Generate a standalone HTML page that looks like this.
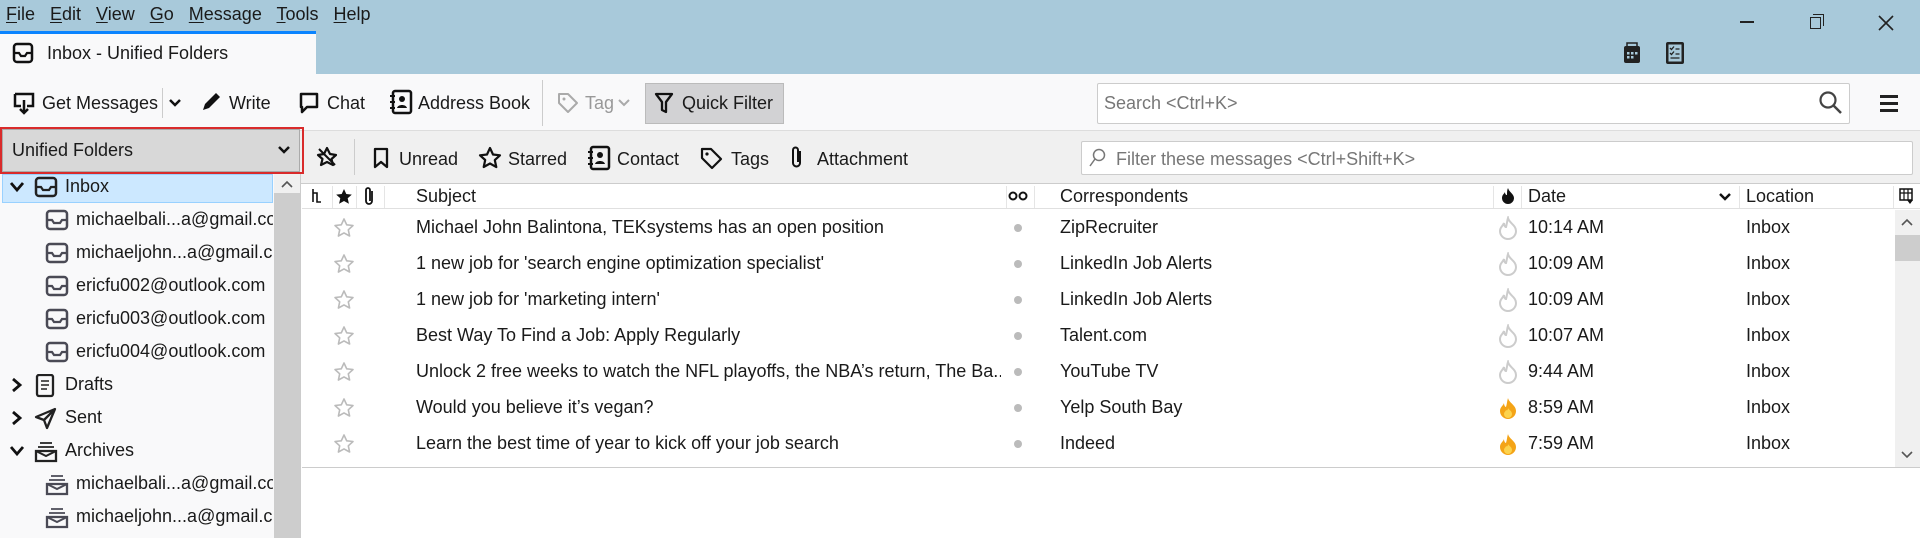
<!DOCTYPE html>
<html><head><meta charset="utf-8"><style>
*{margin:0;padding:0;box-sizing:border-box}
body{width:1920px;height:538px;overflow:hidden;font-family:"Liberation Sans",sans-serif;font-size:18px;color:#1a1a1a;background:#fff;position:relative}
.a{position:absolute;white-space:nowrap}
svg{position:absolute}
.u{text-decoration:underline;text-underline-offset:2px}
</style></head><body>
<!-- title/tab strip -->
<div class="a" style="left:0;top:0;width:1920px;height:74px;background:#a8c9da"></div>
<div class="a" style="left:6px;top:4px;font-size:18px"><span class="u">F</span>ile&nbsp;&nbsp; <span class="u">E</span>dit&nbsp;&nbsp; <span class="u">V</span>iew&nbsp;&nbsp; <span class="u">G</span>o&nbsp;&nbsp; <span class="u">M</span>essage&nbsp;&nbsp; <span class="u">T</span>ools&nbsp;&nbsp; <span class="u">H</span>elp</div>
<div class="a" style="left:0;top:31px;width:316px;height:44px;background:#f9f9fa;border-top:3px solid #0a84ff"></div>
<svg style="left:12px;top:42px" width="22" height="22" viewBox="0 0 22 22"><rect x="2" y="2" width="18" height="18" rx="3" fill="none" stroke="#111" stroke-width="2.5"/><path d="M2 11h5l2 3h4l2-3h5" fill="none" stroke="#111" stroke-width="2.2"/></svg>
<div class="a" style="left:47px;top:43px">Inbox - Unified Folders</div>
<!-- window controls -->
<div class="a" style="left:1740px;top:21px;width:14px;height:1.5px;background:#222"></div>
<div class="a" style="left:1810px;top:17px;width:11px;height:12px;border:1.5px solid #222"></div>
<div class="a" style="left:1813px;top:14px;width:11px;height:12px;border-top:1.5px solid #222;border-right:1.5px solid #222"></div>
<svg style="left:1877px;top:14px" width="18" height="18"><path d="M2 2L16 16M16 2L2 16" stroke="#222" stroke-width="1.6"/></svg>
<svg style="left:1622px;top:42px" width="20" height="22"><rect x="2" y="4" width="16" height="17" rx="2" fill="#222"/><rect x="5" y="1" width="10" height="5" fill="none" stroke="#222" stroke-width="1.5"/><g fill="#a8c9da"><rect x="5" y="10" width="2.5" height="2.5"/><rect x="9" y="10" width="2.5" height="2.5"/><rect x="13" y="10" width="2.5" height="2.5"/><rect x="5" y="14" width="2.5" height="2.5"/><rect x="9" y="14" width="2.5" height="2.5"/></g></svg>
<svg style="left:1665px;top:41px" width="20" height="24"><rect x="1" y="1" width="18" height="22" rx="2" fill="#222"/><rect x="3.5" y="3.5" width="13" height="17" fill="#a8c9da"/><path d="M5 7l1.5 1.5 2.5-3M5 12l1.5 1.5 2.5-3M10.5 8h4M10.5 13h4M5.5 17h9" stroke="#222" stroke-width="1.3" fill="none"/></svg>
<!-- main toolbar -->
<div class="a" style="left:0;top:74px;width:1920px;height:57px;background:#f9f9fa;border-bottom:1px solid #ddd"></div>
<svg style="left:12px;top:91px" width="24" height="24"><path d="M3 3h18v12h-6M9 15H3V3" fill="none" stroke="#111" stroke-width="2.5"/><path d="M12 9v13M8 18l4 4 4-4" fill="none" stroke="#111" stroke-width="2.5"/></svg>
<div class="a" style="left:42px;top:93px">Get Messages</div>
<div class="a" style="left:162px;top:88px;width:1px;height:30px;background:#ccc"></div>
<svg style="left:168px;top:97px" width="14" height="12"><path d="M2 3l5 5 5-5" fill="none" stroke="#111" stroke-width="2.5"/></svg>
<svg style="left:200px;top:91px" width="22" height="22"><path d="M3 19l2-6L16 2l4 4L9 17z" fill="#111"/></svg>
<div class="a" style="left:229px;top:93px">Write</div>
<svg style="left:298px;top:91px" width="22" height="24"><path d="M3 3h16v13H9l-5 5v-5H3z" fill="none" stroke="#111" stroke-width="2.5" stroke-linejoin="round"/></svg>
<div class="a" style="left:327px;top:93px">Chat</div>
<svg style="left:389px;top:89px" width="24" height="26"><rect x="4" y="2" width="18" height="22" rx="2" fill="none" stroke="#111" stroke-width="2.5"/><circle cx="13" cy="10" r="3" fill="#111"/><path d="M8 19c1-4 9-4 10 0z" fill="#111"/><path d="M1 7h5M1 13h5M1 19h5" stroke="#111" stroke-width="2"/></svg>
<div class="a" style="left:418px;top:93px">Address Book</div>
<div class="a" style="left:542px;top:80px;width:1px;height:46px;background:#ccc"></div>
<svg style="left:557px;top:92px" width="22" height="22"><path d="M2 2h9l9 9-9 9-9-9z" fill="none" stroke="#aaa" stroke-width="2" stroke-linejoin="round"/><circle cx="7" cy="7" r="1.5" fill="#aaa"/></svg>
<div class="a" style="left:585px;top:93px;color:#999">Tag</div>
<svg style="left:617px;top:98px" width="14" height="10"><path d="M2 2l5 5 5-5" fill="none" stroke="#aaa" stroke-width="2"/></svg>
<div class="a" style="left:645px;top:83px;width:139px;height:41px;background:#d2d2d4;border:1px solid #bbb"></div>
<svg style="left:654px;top:92px" width="20" height="22"><path d="M2 2h16l-6 8v10l-4-2v-8z" fill="none" stroke="#111" stroke-width="2.3" stroke-linejoin="round"/></svg>
<div class="a" style="left:682px;top:93px">Quick Filter</div>
<div class="a" style="left:1097px;top:83px;width:753px;height:41px;background:#fff;border:1px solid #ccc;border-radius:2px"></div>
<div class="a" style="left:1104px;top:93px;color:#777">Search &lt;Ctrl+K&gt;</div>
<svg style="left:1818px;top:90px" width="26" height="26"><circle cx="10" cy="10" r="7.5" fill="none" stroke="#444" stroke-width="2.2"/><path d="M15.5 15.5L23 23" stroke="#444" stroke-width="2.5"/></svg>
<div class="a" style="left:1880px;top:95px;width:18px;height:3px;background:#222;box-shadow:0 7px 0 #222,0 14px 0 #222"></div>
<!-- quick filter bar -->
<div class="a" style="left:0;top:131px;width:1920px;height:53px;background:#f0f0f0;border-bottom:1px solid #ccc"></div>
<div class="a" style="left:0;top:127px;width:304px;height:47px;border:2px solid #d92b2b"></div>
<div class="a" style="left:2px;top:129px;width:298px;height:43px;background:#d8d8d8;border:1px solid #aaa"></div>
<div class="a" style="left:12px;top:140px">Unified Folders</div>
<svg style="left:277px;top:145px" width="14" height="10"><path d="M2 2l5 5 5-5" fill="none" stroke="#111" stroke-width="2.5"/></svg>
<svg style="left:316px;top:146px" width="22" height="22"><path d="M11 2l3 6 6 1-4.5 4 1.5 6-6-3-6 3 1.5-6L2 9l6-1z" fill="none" stroke="#111" stroke-width="2.2" stroke-linejoin="round"/><path d="M3 3l16 16" stroke="#111" stroke-width="2"/></svg>
<div class="a" style="left:354px;top:139px;width:1px;height:36px;background:#ccc"></div>
<svg style="left:373px;top:147px" width="16" height="22"><path d="M2 2h12v18l-6-5-6 5z" fill="none" stroke="#111" stroke-width="2.3" stroke-linejoin="round"/></svg>
<div class="a" style="left:399px;top:149px">Unread</div>
<svg style="left:478px;top:146px" width="24" height="24"><path d="M12 2l3 6.5 7 .8-5.2 4.8 1.5 7L12 17.5 5.7 21l1.5-7L2 9.3l7-.8z" fill="none" stroke="#111" stroke-width="2.2" stroke-linejoin="round"/></svg>
<div class="a" style="left:508px;top:149px">Starred</div>
<svg style="left:587px;top:145px" width="24" height="26"><rect x="4" y="2" width="18" height="22" rx="2" fill="none" stroke="#111" stroke-width="2.5"/><circle cx="13" cy="10" r="3" fill="#111"/><path d="M8 19c1-4 9-4 10 0z" fill="#111"/><path d="M1 7h5M1 13h5M1 19h5" stroke="#111" stroke-width="2"/></svg>
<div class="a" style="left:617px;top:149px">Contact</div>
<svg style="left:700px;top:147px" width="24" height="24"><path d="M2 2h9l10 10-9 9L2 11z" fill="none" stroke="#111" stroke-width="2.2" stroke-linejoin="round"/><circle cx="7" cy="7" r="1.6" fill="#111"/></svg>
<div class="a" style="left:731px;top:149px">Tags</div>
<svg style="left:789px;top:145px" width="16" height="26"><path d="M11 6v12a3.5 3.5 0 0 1-7 0V5a2.5 2.5 0 0 1 5 0v12" fill="none" stroke="#111" stroke-width="2"/></svg>
<div class="a" style="left:817px;top:149px">Attachment</div>
<div class="a" style="left:1081px;top:141px;width:832px;height:34px;background:#fff;border:1px solid #ccc;border-radius:2px"></div>
<svg style="left:1088px;top:148px" width="18" height="20"><circle cx="11" cy="7" r="5.5" fill="none" stroke="#777" stroke-width="1.5"/><path d="M7 11L2 18" stroke="#777" stroke-width="1.5"/></svg>
<div class="a" style="left:1116px;top:149px;color:#777">Filter these messages &lt;Ctrl+Shift+K&gt;</div>
<!-- folder pane -->
<div class="a" style="left:0;top:174px;width:301px;height:364px;background:#f9f9fa;border-right:1px solid #ccc"></div>
<div class="a" style="left:274px;top:193px;width:26px;height:345px;background:#cdcdcd"></div>
<div class="a" style="left:274px;top:174px;width:26px;height:19px;background:#f0f0f0"></div>
<svg style="left:280px;top:179px" width="14" height="10"><path d="M2 8l5-5 5 5" fill="none" stroke="#555" stroke-width="1.6"/></svg>
<div class="a" style="left:2px;top:174px;width:271px;height:29px;background:#cce8ff;border:1px solid #99d1ff"></div>
<div id="fp"></div>
<!-- thread pane -->
<div class="a" style="left:302px;top:184px;width:1618px;height:25px;background:#fff;border-bottom:1px solid #e0e0e0"></div>
<svg style="left:310px;top:188px" width="12" height="16"><path d="M3 1v13M3 5h4v9h4" fill="none" stroke="#111" stroke-width="1.6"/></svg>
<div class="a" style="left:332px;top:186px;width:1px;height:22px;background:#e5e5e5"></div>
<svg style="left:335px;top:188px" width="18" height="18"><path d="M9 1l2.3 5 5.5.6-4.1 3.7 1.2 5.4L9 13l-4.9 2.7 1.2-5.4L1.2 6.6l5.5-.6z" fill="#111"/></svg>
<div class="a" style="left:356px;top:186px;width:1px;height:22px;background:#e5e5e5"></div>
<svg style="left:362px;top:186px" width="14" height="22"><path d="M10 5v10a3 3 0 0 1-6 0V4a2 2 0 0 1 4 0v11" fill="none" stroke="#111" stroke-width="1.8"/></svg>
<div class="a" style="left:384px;top:186px;width:1px;height:22px;background:#e5e5e5"></div>
<div class="a" style="left:416px;top:186px">Subject</div>
<div class="a" style="left:1006px;top:186px;width:1px;height:22px;background:#e5e5e5"></div>
<svg style="left:1008px;top:191px" width="20" height="10"><circle cx="5" cy="5" r="3.5" fill="none" stroke="#111" stroke-width="2"/><circle cx="15" cy="5" r="3.5" fill="none" stroke="#111" stroke-width="2"/></svg>
<div class="a" style="left:1034px;top:186px;width:1px;height:22px;background:#e5e5e5"></div>
<div class="a" style="left:1060px;top:186px">Correspondents</div>
<div class="a" style="left:1493px;top:186px;width:1px;height:22px;background:#e5e5e5"></div>
<svg style="left:1501px;top:187px" width="14" height="18"><path d="M7 1c1 4 6 6 6 10a6 6 0 0 1-12 0c0-3 2-4 3-6 0 2 1 3 2 3 0-3 0-5 1-7z" fill="#111"/></svg>
<div class="a" style="left:1521px;top:186px;width:1px;height:22px;background:#e5e5e5"></div>
<div class="a" style="left:1528px;top:186px">Date</div>
<svg style="left:1718px;top:192px" width="14" height="10"><path d="M2 2l5 5 5-5" fill="none" stroke="#111" stroke-width="2.5"/></svg>
<div class="a" style="left:1739px;top:186px;width:1px;height:22px;background:#e5e5e5"></div>
<div class="a" style="left:1746px;top:186px">Location</div>
<div class="a" style="left:1893px;top:186px;width:1px;height:22px;background:#e5e5e5"></div>
<svg style="left:1899px;top:188px" width="16" height="18"><rect x="1" y="1" width="12" height="11" fill="none" stroke="#111" stroke-width="1.5"/><path d="M1 5h12M5 1v11M9 1v11" stroke="#111" stroke-width="1.2"/><path d="M8 12l3 4 3-4z" fill="#111"/></svg>
<div class="a" style="left:1895px;top:210px;width:25px;height:258px;background:#f0f0f0"></div>
<div class="a" style="left:1895px;top:235px;width:25px;height:26px;background:#cdcdcd"></div>
<svg style="left:1900px;top:217px" width="14" height="10"><path d="M2 8l5-5 5 5" fill="none" stroke="#555" stroke-width="1.6"/></svg>
<svg style="left:1900px;top:450px" width="14" height="10"><path d="M2 2l5 5 5-5" fill="none" stroke="#555" stroke-width="1.6"/></svg>
<div id="rows"></div>
<div class="a" style="left:302px;top:467px;width:1618px;height:1px;background:#ccc"></div>
<script>
var fp=[["Inbox",187,1,"in",18,0,"down"],["michaelbali...a@gmail.co",220,2,"in",0],["michaeljohn...a@gmail.co",253,2,"in",0],["ericfu002@outlook.com",286,2,"in",0],["ericfu003@outlook.com",319,2,"in",0],["ericfu004@outlook.com",352,2,"in",0],["Drafts",385,1,"dr",0,0,"right"],["Sent",418,1,"se",0,0,"right"],["Archives",451,1,"ar",0,0,"down"],["michaelbali...a@gmail.co",484,2,"ar",0],["michaeljohn...a@gmail.co",517,2,"ar",0]];
var icons={in:'<rect x="2" y="2" width="20" height="18" rx="3" fill="none" stroke="C" stroke-width="2.5"/><path d="M2 11h5l2 3h6l2-3h5" fill="none" stroke="C" stroke-width="2.2"/>',
dr:'<rect x="3" y="1" width="16" height="21" rx="2" fill="none" stroke="C" stroke-width="2.3"/><path d="M7 7h8M7 11h8M7 15h6" stroke="C" stroke-width="1.6"/>',
se:'<path d="M21 2L2 10l8 3 3 8z M21 2L10 13" fill="none" stroke="C" stroke-width="2.3" stroke-linejoin="round"/>',
ar:'<path d="M6 3h12M4 7h16" stroke="C" stroke-width="1.8"/><path d="M2 11h20v10H2z" fill="none" stroke="C" stroke-width="2.3"/><path d="M2 11l10 5 10-5" fill="none" stroke="C" stroke-width="2"/>'};
var h="";fp.forEach(function(f){var y=f[1],lvl=f[2];var ix=lvl==1?34:45,tx=lvl==1?65:76;var c=lvl==1?"#222":"#4a4a55";
if(f[6]){h+='<svg style="left:8px;top:'+(y-9)+'px" width="18" height="18">'+(f[6]=="down"?'<path d="M3 5l6 7 6-7" fill="none" stroke="#111" stroke-width="2.8"/>':'<path d="M5 3l7 6-7 6" fill="none" stroke="#111" stroke-width="2.8"/>')+'</svg>';}
h+='<svg style="left:'+ix+'px;top:'+(y-11)+'px" width="24" height="24">'+icons[f[3]].replace(/C/g,c)+'</svg>';
h+='<div class="a" style="left:'+tx+'px;top:'+(y-11)+'px;width:'+(273-tx)+'px;overflow:hidden">'+f[0]+'</div>';});
document.getElementById("fp").outerHTML=h;
var rows=[["Michael John Balintona, TEKsystems has an open position","ZipRecruiter","10:14 AM",0],["1 new job for 'search engine optimization specialist'","LinkedIn Job Alerts","10:09 AM",0],["1 new job for 'marketing intern'","LinkedIn Job Alerts","10:09 AM",0],["Best Way To Find a Job: Apply Regularly","Talent.com","10:07 AM",0],["Unlock 2 free weeks to watch the NFL playoffs, the NBA’s return, The Ba...","YouTube TV","9:44 AM",0],["Would you believe it’s vegan?","Yelp South Bay","8:59 AM",1],["Learn the best time of year to kick off your job search","Indeed","7:59 AM",1]];
var r="";rows.forEach(function(x,i){var y=228+i*36;
r+='<svg style="left:333px;top:'+(y-11)+'px" width="22" height="22"><path d="M11 2l2.7 5.8 6.3.7-4.7 4.3 1.3 6.2L11 15.9 5.4 19l1.3-6.2L2 8.5l6.3-.7z" fill="none" stroke="#bbb" stroke-width="1.6" stroke-linejoin="round"/></svg>';
r+='<div class="a" style="left:416px;top:'+(y-11)+'px;width:585px;overflow:hidden">'+x[0]+'</div>';
r+='<div class="a" style="left:1014px;top:'+(y-4)+'px;width:8px;height:8px;border-radius:50%;background:#bbb"></div>';
r+='<div class="a" style="left:1060px;top:'+(y-11)+'px">'+x[1]+'</div>';
r+='<svg style="left:1498px;top:'+(y-12)+'px" width="20" height="24">'+(x[3]?'<path d="M10 2c1 5 8 7 8 13a8 8 0 0 1-16 0c0-4 3-5 4-8 0 2 1 4 2 4 1-3 1-6 2-9z" fill="#f4a417"/><path d="M10 12c1 2 4 3 4 6a4 4 0 0 1-8 0c0-2 2-3 2-4 1 1 2 0 2-2z" fill="#fcd34d"/>':'<path d="M10 2c1 5 8 7 8 13a8 8 0 0 1-16 0c0-4 3-5 4-8 0 2 1 4 2 4 1-3 1-6 2-9z" fill="none" stroke="#ccc" stroke-width="2"/>')+'</svg>';
r+='<div class="a" style="left:1528px;top:'+(y-11)+'px">'+x[2]+'</div>';
r+='<div class="a" style="left:1746px;top:'+(y-11)+'px">Inbox</div>';});
document.getElementById("rows").outerHTML=r;
</script>
</body></html>
